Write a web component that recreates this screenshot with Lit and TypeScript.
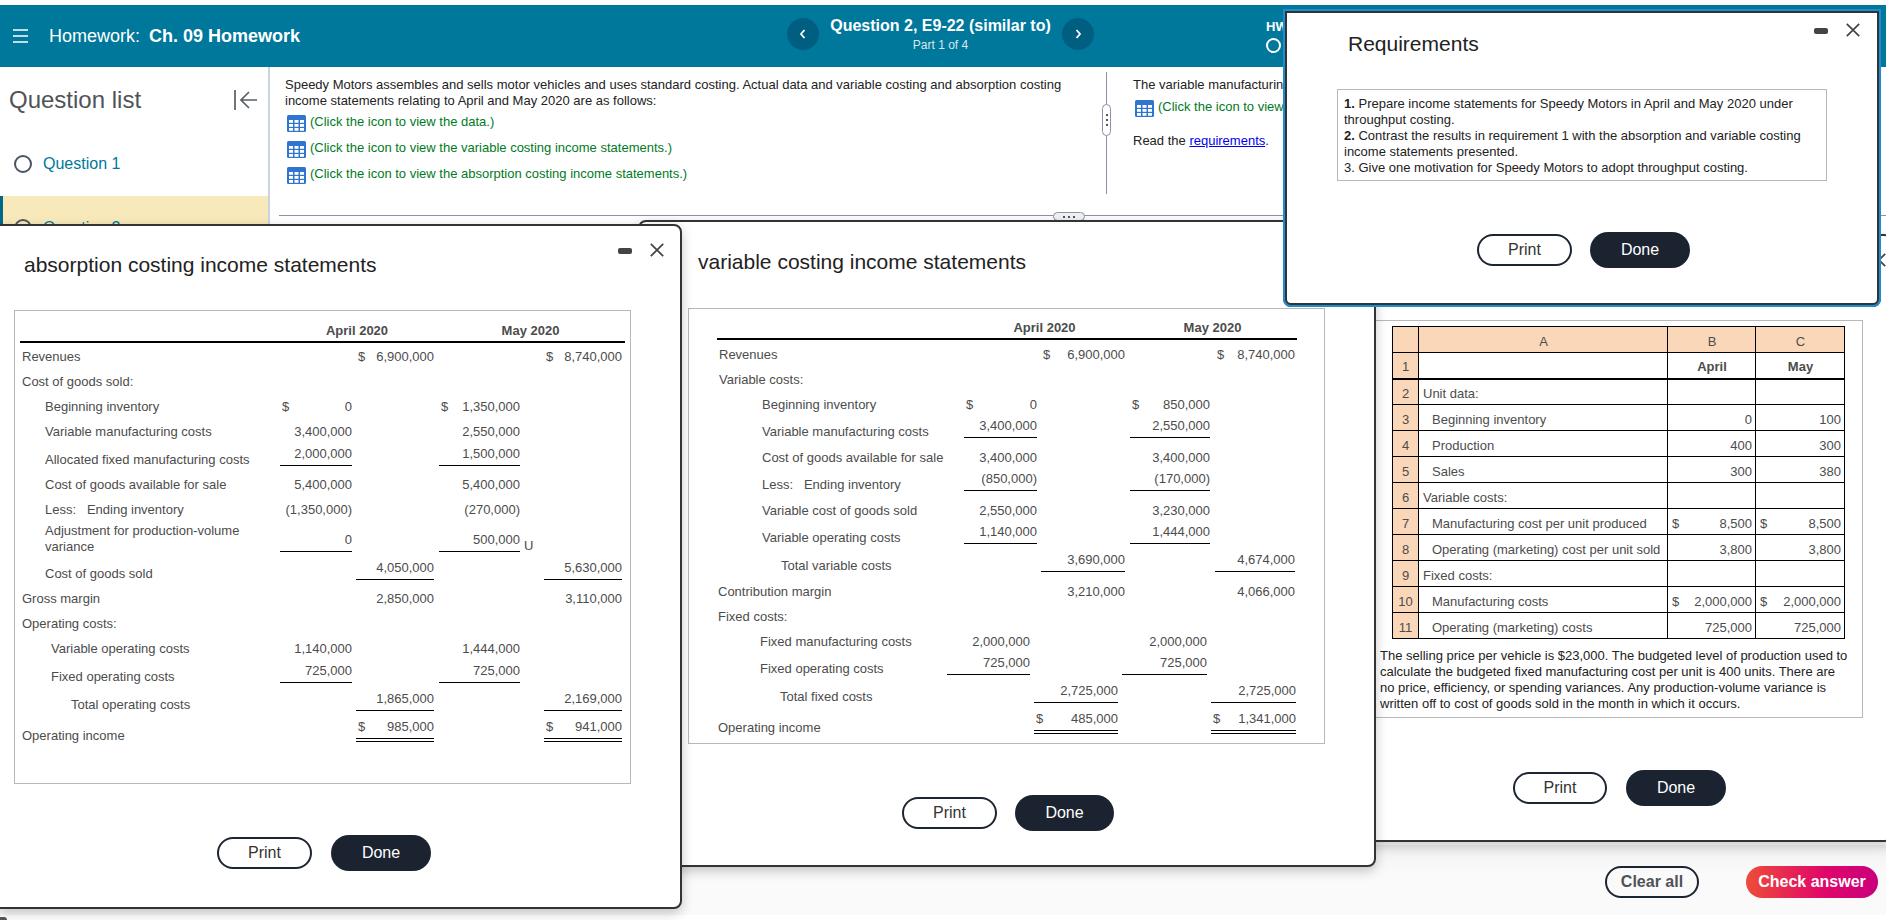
import { LitElement, html, css, svg } from "lit";
import { customElement } from "lit/decorators.js";

type Row = [string, number, "p" | "u" | "a" | "d", (string | null)[], string?];

const ABS: Row[] = [
  ["Revenues", 2, "p", [null, "$6,900,000", null, "$8,740,000"]],
  ["Cost of goods sold:", 2, "p", []],
  ["Beginning inventory", 25, "p", ["$0", null, "$1,350,000", null]],
  ["Variable manufacturing costs", 25, "p", ["3,400,000", null, "2,550,000", null]],
  ["Allocated fixed manufacturing costs", 25, "u", ["2,000,000", null, "1,500,000", null]],
  ["Cost of goods available for sale", 25, "p", ["5,400,000", null, "5,400,000", null]],
  ["Less:\u00a0\u00a0\u00a0Ending inventory", 25, "p", ["(1,350,000)", null, "(270,000)", null]],
  ["Adjustment for production-volume\nvariance", 25, "a", ["0", null, "500,000", null], "U"],
  ["Cost of goods sold", 25, "u", [null, "4,050,000", null, "5,630,000"]],
  ["Gross margin", 2, "p", [null, "2,850,000", null, "3,110,000"]],
  ["Operating costs:", 2, "p", []],
  ["Variable operating costs", 31, "p", ["1,140,000", null, "1,444,000", null]],
  ["Fixed operating costs", 31, "u", ["725,000", null, "725,000", null]],
  ["Total operating costs", 51, "u", [null, "1,865,000", null, "2,169,000"]],
  ["Operating income", 2, "d", [null, "$985,000", null, "$941,000"]],
];

const VAR_TOP: Row[] = [
  ["Revenues", 2, "p", [null, "$6,900,000", null, "$8,740,000"]],
  ["Variable costs:", 2, "p", []],
  ["Beginning inventory", 45, "p", ["$0", null, "$850,000", null]],
  ["Variable manufacturing costs", 45, "u", ["3,400,000", null, "2,550,000", null]],
  ["Cost of goods available for sale", 45, "p", ["3,400,000", null, "3,400,000", null]],
  ["Less:\u00a0\u00a0\u00a0Ending inventory", 45, "u", ["(850,000)", null, "(170,000)", null]],
  ["Variable cost of goods sold", 45, "p", ["2,550,000", null, "3,230,000", null]],
  ["Variable operating costs", 45, "u", ["1,140,000", null, "1,444,000", null]],
  ["Total variable costs", 64, "u", [null, "3,690,000", null, "4,674,000"]],
  ["Contribution margin", 1, "p", [null, "3,210,000", null, "4,066,000"]],
];

const VAR_BOTTOM: Row[] = [
  ["Fixed costs:", 1, "p", []],
  ["Fixed manufacturing costs", 43, "p", ["2,000,000", null, "2,000,000", null]],
  ["Fixed operating costs", 43, "u", ["725,000", null, "725,000", null]],
  ["Total fixed costs", 63, "u", [null, "2,725,000", null, "2,725,000"]],
  ["Operating income", 1, "d", [null, "$485,000", null, "$1,341,000"]],
];

type Sheet = [string, number, string, string];
const SHEET: Sheet[] = [
  ["Unit data:", 0, "", ""],
  ["Beginning inventory", 1, "0", "100"],
  ["Production", 1, "400", "300"],
  ["Sales", 1, "300", "380"],
  ["Variable costs:", 0, "", ""],
  ["Manufacturing cost per unit produced", 1, "$8,500", "$8,500"],
  ["Operating (marketing) cost per unit sold", 1, "3,800", "3,800"],
  ["Fixed costs:", 0, "", ""],
  ["Manufacturing costs", 1, "$2,000,000", "$2,000,000"],
  ["Operating (marketing) costs", 1, "725,000", "725,000"],
];

const gridIcon = () => svg`
  <svg class="grid-ico" viewBox="0 0 19 17" width="19" height="17" aria-hidden="true">
    <rect width="19" height="17" rx="1.5" fill="#2f74d0"/>
    ${[5, 9, 13].flatMap((y) =>
      [2, 7.5, 13].map((x) => svg`<rect x=${x} y=${y} width="4" height="2.8" fill="#fff"/>`)
    )}
  </svg>`;

const closeIcon = () => svg`
  <svg viewBox="0 0 14 14" width="14" height="14" aria-hidden="true">
    <path d="M0.8 0.8 13.2 13.2M13.2 0.8 0.8 13.2" stroke="#444" stroke-width="1.7" fill="none"/>
  </svg>`;

@customElement("app-root")
export class AppRoot extends LitElement {
  static styles = css`
    :host {
      display: block;
      position: relative;
      width: 1886px;
      height: 920px;
      overflow: hidden;
      background: #fff;
      font-family: "Liberation Sans", Arial, sans-serif;
      font-size: 13px;
      color: #222;
    }
    .page { display: flex; flex-direction: column; height: 915px; padding-top: 5px; box-sizing: border-box; }

    .top { height: 62px; flex: none; background: #00789c; color: #fff; display: flex; align-items: center; position: relative; }
    .burger { margin-left: 13px; width: 15px; height: 14px; flex: none; }
    .hw-title { margin-left: 21px; width: 738px; flex: none; font-size: 18px; white-space: nowrap; }
    .hw-title b { margin-left: 9px; }
    .nav { display: flex; align-items: center; width: 307px; flex: none; }
    .nav-btn { width: 32px; height: 32px; border-radius: 50%; background: #005f80; display: flex; align-items: center; justify-content: center; flex: none; margin-top: -4px; }
    .nav-mid { flex: 1; text-align: center; margin-top: -5px; }
    .nav-t { font-size: 16px; font-weight: 700; line-height: 20px; }
    .nav-s { font-size: 12px; line-height: 14px; margin-top: 2px; color: #d8e8ee; }
    .hw { margin-left: 172px; font-size: 13px; font-weight: 700; }
    .hw i { display: block; width: 15px; height: 15px; border: 2px solid #fff; border-radius: 50%; box-sizing: border-box; margin-top: 4px; }

    .main { flex: 1; display: flex; min-height: 0; }
    .side { width: 270px; flex: none; box-sizing: border-box; border-right: 2px solid #ccd3e0; }
    .side-h { height: 65px; display: flex; align-items: center; justify-content: space-between; padding: 0 11px 0 9px; font-size: 24px; color: #4f5358; }
    .q { height: 64px; display: flex; align-items: center; font-size: 16px; color: #00789c; padding-left: 14px; box-sizing: border-box; gap: 11px; }
    .q i { width: 18px; height: 18px; border: 2px solid #4a5563; border-radius: 50%; box-sizing: border-box; }
    .q.cur { background: #f8e9ba; border-left: 3px solid #00698a; padding-left: 11px; }

    .content { flex: 1; min-width: 0; }
    .upper { height: 149px; display: flex; box-sizing: border-box; border-bottom: 1px solid #8a93a6; margin-left: 9px; position: relative; }
    .lp { width: 827px; flex: none; padding: 10px 0 0 6px; box-sizing: border-box; line-height: 16px; }
    .g-link { height: 26px; display: flex; align-items: center; color: #007a1e; white-space: nowrap; }
    .grid-ico { margin: 2px 4px 0 2px; flex: none; }
    .vdiv { width: 1px; flex: none; background: #8a93a6; margin: 5px 0 21px; position: relative; }
    .vhandle { position: absolute; left: -4px; top: 32px; width: 9px; height: 32px; box-sizing: border-box; background: #fff; border: 1px solid #8a93a6; border-radius: 5px; display: flex; flex-direction: column; align-items: center; justify-content: center; gap: 3px; }
    .vhandle i, .hhandle i { width: 2px; height: 2px; background: #555; flex: none; }
    .hhandle { position: absolute; left: 774px; top: 145px; width: 32px; height: 9px; box-sizing: border-box; background: #f0f2f6; border: 1px solid #8a93a6; border-radius: 5px; display: flex; align-items: center; justify-content: center; gap: 3px; }
    .rp { flex: 1; min-width: 0; padding: 10px 0 0 26px; line-height: 16px; white-space: nowrap; overflow: hidden; }
    .rp .g-link { height: 20px; margin-top: 4px; }
    .rp .read { margin-top: 16px; }
    .rp a { color: #0000ee; text-decoration: underline; }

    .foot { height: 70px; flex: none; display: flex; align-items: center; justify-content: flex-end; gap: 47px; padding: 4px 8px 0 0; box-sizing: border-box; background: linear-gradient(#f1f1f1, #fafafa 40%); }
    .clear, .check { height: 32px; border-radius: 16px; box-sizing: border-box; display: flex; align-items: center; justify-content: center; font-size: 16px; font-weight: 700; }
    .clear { width: 94px; border: 2px solid #1e2532; color: #4f5358; }
    .check { width: 132px; color: #fff; background: linear-gradient(90deg, #ee4c38, #e0066a 60%, #c8007c); }

    .win { position: absolute; box-sizing: border-box; background: #fff; border: 2px solid #333; border-radius: 8px; box-shadow: 0 4px 12px rgba(0, 0, 0, 0.22); }
    .win-abs { left: -2px; top: 224px; width: 684px; height: 685px; z-index: 3; border-radius: 0 8px 8px 0; }
    .win-var { left: 638px; top: 220px; width: 738px; height: 647px; z-index: 2; }
    .win-data { left: 1250px; top: 234px; width: 642px; height: 608px; z-index: 1; }
    .win-req { left: 1283px; top: 9px; width: 598px; height: 298px; z-index: 4; border: none; padding: 0 4px 4px; background: #fff; border-radius: 0 0 8px 8px; box-shadow: inset 0 0 0 2px #1f8ccf, inset 0 0 0 4px #333; clip-path: inset(0 0 -10px 0); }
    .cut { position: absolute; left: 0; top: 917px; width: 7px; height: 3px; background: #555; border-top-right-radius: 4px; z-index: 5; }

    .wh { display: flex; justify-content: space-between; align-items: flex-start; }
    .wt { font-size: 21px; line-height: 24px; color: #222; white-space: nowrap; }
    .ctl { display: flex; align-items: center; gap: 18px; flex: none; }
    .ctl i { width: 14px; height: 6px; background: #444; border-radius: 2px; display: block; margin-top: 2px; }
    .abs-h { height: 84px; padding: 27px 16px 0 24px; box-sizing: border-box; }
    .abs-h .ctl { margin-top: -10px; }
    .var-h { height: 86px; padding: 28px 16px 0 58px; box-sizing: border-box; }
    .data-h { height: 84px; padding: 17px 4px 0 0; box-sizing: border-box; justify-content: flex-end; }
    .req-h { height: 80px; padding: 23px 17px 0 61px; box-sizing: border-box; }
    .req-h .ctl { margin-top: -9px; }

    .box { border: 1px solid #b8b8b8; box-sizing: border-box; }
    .abs-box { margin-left: 14px; width: 617px; height: 474px; padding-left: 5px; }
    .var-box { margin-left: 48px; width: 637px; height: 436px; padding-left: 28px; }
    .data-box { margin-left: 120px; width: 491px; height: 398px; padding: 5px 0 0 6px; }
    .req-box { margin-left: 50px; width: 490px; height: 92px; padding: 6px 6px; line-height: 16px; }

    .stmt { color: #4c4c4c; }
    .hdr { display: grid; border-bottom: 2px solid #000; box-sizing: border-box; align-items: end; font-weight: 700; text-align: center; padding-bottom: 3px; }
    .abs-box .stmt { width: 605px; }
    .var-box .stmt { width: 580px; }
    .abs-box .hdr { height: 32px; margin-bottom: 1.5px; }
    .var-box .hdr { height: 31px; margin-bottom: 2px; }
    .abs-box .hdr, .abs-box .row { grid-template-columns: 260px 72px 4px 78px 5px 81px 24px 78px; }
    .top-rows .hdr, .top-rows .row { grid-template-columns: 247px 73px 4px 84px 5px 80px 5px 80px; }
    .bot-rows .row { grid-template-columns: 230px 83px 4px 84px 4px 85px 4px 85px; }
    .hdr span:nth-child(2) { grid-column: 2 / 5; }
    .hdr span:nth-child(3) { grid-column: 6 / 9; }

    .row { display: grid; height: 25px; line-height: 16px; white-space: nowrap; }
    .row.u { height: 28px; }
    .row.a { height: 36px; }
    .row.d { height: 30px; }
    .lab { white-space: pre-line; align-self: center; }
    .u .lab { align-self: start; padding-top: 7px; }
    .a .lab { align-self: start; }
    .d .lab { align-self: start; padding-top: 10px; }
    .val { display: flex; justify-content: space-between; align-self: center; box-sizing: border-box; padding-left: 2px; }
    .val span:last-child { margin-left: auto; }
    .u .val, .a .val, .d .val { align-self: start; border-bottom: 1px solid #000; }
    .u .val { height: 21px; padding-top: 1px; }
    .a .val { height: 29px; padding-top: 9px; }
    .d .val { height: 24px; padding-top: 1px; border-bottom: 4px double #000; }
    .empty { display: block; }
    .note { padding: 15px 0 0 4px; }

    .sheet { border-collapse: collapse; table-layout: fixed; width: 452px; margin-left: 13px; color: #4c4c4c; line-height: 16px; }
    .sheet td { height: 26px; padding: 4px 3px 0 4px; border: 1px solid #000; box-sizing: border-box; white-space: nowrap; }
    .sheet .n { background: #fbd7b9; text-align: center; padding: 4px 0 0; }
    .sheet .col { background: #fbd7b9; text-align: center; }
    .sheet .bold { font-weight: 700; text-align: center; }
    .sheet .thick td { border-bottom: 2px solid #000; }
    .sheet .ind { padding-left: 13px; }
    .sheet .m { display: flex; justify-content: space-between; }
    .sheet .m span:last-child { margin-left: auto; }
    .para { margin: 9px 0 0 1px; line-height: 16px; white-space: nowrap; }

    .btns { display: flex; align-items: center; }
    .print, .done { box-sizing: border-box; display: flex; align-items: center; justify-content: center; font-size: 16px; border-radius: 18px; flex: none; }
    .print { width: 95px; height: 32px; border: 2px solid #1e2532; color: #333; }
    .done { width: 100px; height: 36px; background: #1c2330; color: #fff; margin-left: 19px; }
    .abs-b { margin-top: 51px; padding-left: 217px; }
    .var-b { margin-top: 51px; padding-left: 262px; }
    .var-b .done { margin-left: 18px; width: 99px; }
    .data-b { margin-top: 52px; padding-left: 261px; }
    .data-b .print { width: 94px; }
    .req-b { margin-top: 51px; padding-left: 190px; }
    .req-b .done { margin-left: 18px; }
  `;

  private money(v: string) {
    const dollar = v.startsWith("$");
    return html`${dollar ? html`<span>$</span>` : null}<span>${dollar ? v.slice(1) : v}</span>`;
  }

  private rows(rows: Row[]) {
    return rows.map(([label, indent, type, cells, note]) => {
      const c = [0, 1, 2, 3].map((i) => cells[i] ?? null);
      const cell = (v: string | null) =>
        v === null ? html`<span class="empty"></span>` : html`<div class="val">${this.money(v)}</div>`;
      return html`<div class="row ${type}">
        <div class="lab" style="padding-left:${indent}px">${label}</div>
        ${cell(c[0])}<span></span>${cell(c[1])}<span></span>${cell(c[2])}
        ${note ? html`<span class="note">${note}</span>` : html`<span></span>`}${cell(c[3])}
      </div>`;
    });
  }

  private header() {
    return html`<div class="hdr"><span></span><span>April 2020</span><span>May 2020</span></div>`;
  }

  private controls() {
    return html`<div class="ctl"><i></i>${closeIcon()}</div>`;
  }

  private buttons(cls: string) {
    return html`<div class="btns ${cls}"><div class="print">Print</div><div class="done">Done</div></div>`;
  }

  render() {
    return html`
      <div class="page">
        <header class="top">
          <svg class="burger" viewBox="0 0 15 14" aria-hidden="true"><path d="M0 1h15M0 7h15M0 13h15" stroke="#fff" stroke-width="1.6"/></svg>
          <div class="hw-title">Homework:<b>Ch. 09 Homework</b></div>
          <div class="nav">
            <div class="nav-btn"><svg width="8" height="10" viewBox="0 0 8 10"><path d="M5.5 1 2 5l3.5 4" fill="none" stroke="#fff" stroke-width="1.8"/></svg></div>
            <div class="nav-mid"><div class="nav-t">Question 2, E9-22 (similar to)</div><div class="nav-s">Part 1 of 4</div></div>
            <div class="nav-btn"><svg width="8" height="10" viewBox="0 0 8 10"><path d="M2.5 1 6 5 2.5 9" fill="none" stroke="#fff" stroke-width="1.8"/></svg></div>
          </div>
          <div class="hw">HW<i></i></div>
        </header>
        <div class="main">
          <aside class="side">
            <div class="side-h"><span>Question list</span>
              <svg width="23" height="20" viewBox="0 0 23 20" aria-hidden="true"><path d="M1 0v20M23 10H7M15 2l-8 8 8 8" fill="none" stroke="#5a5f66" stroke-width="1.7"/></svg>
            </div>
            <div class="q"><i></i>Question 1</div>
            <div class="q cur"><i></i>Question 2</div>
          </aside>
          <section class="content">
            <div class="upper">
              <div class="lp">
                Speedy Motors assembles and sells motor vehicles and uses standard costing. Actual data and variable costing and absorption costing<br />
                income statements relating to April and May 2020 are as follows:
                <div class="g-link">${gridIcon()}(Click the icon to view the data.)</div>
                <div class="g-link">${gridIcon()}(Click the icon to view the variable costing income statements.)</div>
                <div class="g-link">${gridIcon()}(Click the icon to view the absorption costing income statements.)</div>
              </div>
              <div class="vdiv"><div class="vhandle"><i></i><i></i><i></i></div></div>
              <div class="rp">
                The variable manufacturing
                <div class="g-link">${gridIcon()}(Click the icon to view</div>
                <div class="read">Read the <a>requirements</a>.</div>
              </div>
              <div class="hhandle"><i></i><i></i><i></i></div>
            </div>
          </section>
        </div>
        <footer class="foot"><div class="clear">Clear all</div><div class="check">Check answer</div></footer>
      </div>

      <div class="win win-data">
        <div class="wh data-h">${this.controls()}</div>
        <div class="box data-box">
          <table class="sheet">
            <colgroup><col style="width:26px" /><col style="width:249px" /><col style="width:88px" /><col style="width:89px" /></colgroup>
            <tr><td class="n"></td><td class="col">A</td><td class="col">B</td><td class="col">C</td></tr>
            <tr class="thick"><td class="n">1</td><td></td><td class="bold">April</td><td class="bold">May</td></tr>
            ${SHEET.map(([l, ind, b, c], i) => html`<tr>
              <td class="n">${i + 2}</td>
              <td class=${ind ? "ind" : ""}>${l}</td>
              <td><div class="m">${this.money(b)}</div></td>
              <td><div class="m">${this.money(c)}</div></td>
            </tr>`)}
          </table>
          <div class="para">The selling price per vehicle is $23,000. The budgeted level of production used to<br />calculate the budgeted fixed manufacturing cost per unit is 400 units. There are<br />no price, efficiency, or spending variances. Any production-volume variance is<br />written off to cost of goods sold in the month in which it occurs.</div>
        </div>
        ${this.buttons("data-b")}
      </div>

      <div class="win win-var">
        <div class="wh var-h"><div class="wt">variable costing income statements</div>${this.controls()}</div>
        <div class="box var-box">
          <div class="stmt top-rows">${this.header()}${this.rows(VAR_TOP)}</div>
          <div class="stmt bot-rows">${this.rows(VAR_BOTTOM)}</div>
        </div>
        ${this.buttons("var-b")}
      </div>

      <div class="win win-abs">
        <div class="wh abs-h"><div class="wt">absorption costing income statements</div>${this.controls()}</div>
        <div class="box abs-box"><div class="stmt">${this.header()}${this.rows(ABS)}</div></div>
        ${this.buttons("abs-b")}
      </div>

      <div class="win win-req">
        <div class="wh req-h"><div class="wt">Requirements</div>${this.controls()}</div>
        <div class="box req-box">
          <b>1.</b> Prepare income statements for Speedy Motors in April and May 2020 under<br />throughput costing.<br />
          <b>2.</b> Contrast the results in requirement 1 with the absorption and variable costing<br />income statements presented.<br />
          3. Give one motivation for Speedy Motors to adopt throughput costing.
        </div>
        ${this.buttons("req-b")}
      </div>
      <div class="cut"></div>
    `;
  }
}
